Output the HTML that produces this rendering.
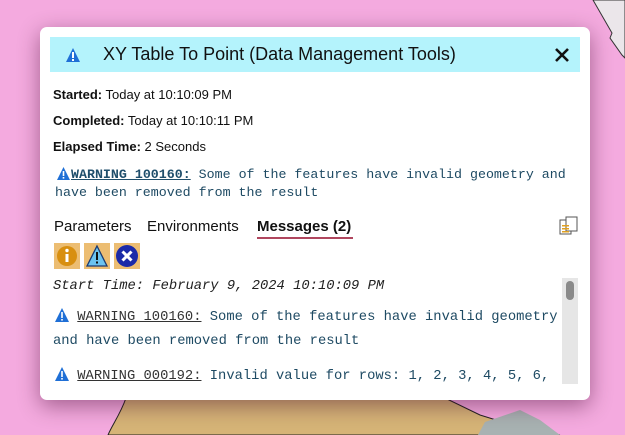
<!DOCTYPE html>
<html><head><meta charset="utf-8"><style>
body{margin:0;width:625px;height:435px;overflow:hidden;background:#f4aadf;position:relative;font-family:"Liberation Sans",sans-serif}
.dlg{position:absolute;left:40px;top:27px;width:550px;height:373px;background:#fff;border-radius:7px;box-shadow:0 6px 22px rgba(60,0,40,.45)}
.hdr{position:absolute;left:10px;top:10px;width:530px;height:35px;background:#b4f3fc}
.abs{position:absolute;white-space:nowrap}
.lbl{font-size:13px;color:#111}
.mono{font-family:"Liberation Mono",monospace;color:#1e4a63}
.tri{display:inline-block;vertical-align:-2px}
.ico{position:absolute;top:216px;width:26px;height:26px;background:#ecbd72}
</style></head><body>
<svg class="abs" style="left:0;top:0" width="625" height="435">
<path d="M126 398 C120 415 112 425 108 435 L560 435 L535 432 L480 415 L445 398 Z" fill="#d6b477" stroke="#222" stroke-width="1"/>
<path d="M485 422 L520 410 L540 420 L560 435 L478 435 Z" fill="#a8b2b2"/>
<path d="M593 0 L612 33 L610 38 L622 55 L625 58 L625 0 Z" fill="#ebe6ea" stroke="#333" stroke-width="1"/>
</svg>
<div class="dlg">
<div class="hdr">
<svg class="abs" style="left:16px;top:11px" width="14" height="14"><path d="M7 0 L14 14 L0 14 Z" fill="#1f6fd6"/><rect x="6" y="4" width="2" height="6" fill="#fff"/><rect x="6" y="11" width="2" height="2" fill="#fff"/></svg>
<div class="abs" style="left:53px;top:7px;font-size:18px;color:#111">XY Table To Point (Data Management Tools)</div>
<svg class="abs" style="left:505px;top:11px" width="14" height="14"><path d="M1 1 L13 13 M13 1 L1 13" stroke="#111" stroke-width="2.6"/></svg>
</div>
<div class="abs lbl" style="left:13px;top:60px"><b>Started:</b> Today at 10:10:09 PM</div>
<div class="abs lbl" style="left:13px;top:86px"><b>Completed:</b> Today at 10:10:11 PM</div>
<div class="abs lbl" style="left:13px;top:112px"><b>Elapsed Time:</b> 2 Seconds</div>
<div class="abs mono" style="left:15px;top:139px;font-size:13.3px;line-height:18px"><svg class="tri" width="16" height="13"><path d="M8.5 0 L15 13 L2 13 Z" fill="#1f6fd6"/><rect x="7.7" y="4" width="1.6" height="5" fill="#fff"/><rect x="7.7" y="10" width="1.6" height="1.6" fill="#fff"/></svg><b style="text-decoration:underline;color:#1f4e6b">WARNING 100160:</b> Some of the features have invalid geometry and<br>have been removed from the result</div>
<div class="abs" style="left:14px;top:191px;font-size:15px;color:#111">Parameters</div>
<div class="abs" style="left:107px;top:191px;font-size:15px;color:#111">Environments</div>
<div class="abs" style="left:217px;top:191px;font-size:15px;color:#111;font-weight:bold">Messages (2)</div>
<div class="abs" style="left:217px;top:210px;width:96px;height:2px;background:#b0465e"></div>
<svg class="abs" style="left:519px;top:189px" width="20" height="20"><rect x="1" y="4" width="11" height="14" fill="#fff" stroke="#555"/><rect x="7" y="1" width="11" height="14" fill="#fff" stroke="#555"/><rect x="3" y="9" width="7" height="1.5" fill="#e0a020"/><rect x="3" y="12" width="7" height="1.5" fill="#e0a020"/><rect x="3" y="15" width="7" height="1.5" fill="#e0a020"/></svg>
<div class="ico" style="left:14px"><svg width="26" height="26"><circle cx="13" cy="13" r="10" fill="#d88f10"/><rect x="11.5" y="11" width="3" height="8" fill="#fff"/><circle cx="13" cy="7.5" r="1.7" fill="#fff"/></svg></div>
<div class="ico" style="left:44px"><svg width="26" height="26"><path d="M13 3 L23 23 L3 23 Z" fill="#6cc3ef" stroke="#1c3a70" stroke-width="1.3"/><rect x="12" y="9" width="2" height="8" fill="#111"/><rect x="12" y="18.5" width="2" height="2" fill="#111"/></svg></div>
<div class="ico" style="left:74px"><svg width="26" height="26"><circle cx="13" cy="13" r="11" fill="#1b2aa8"/><path d="M8.5 8.5 L17.5 17.5 M17.5 8.5 L8.5 17.5" stroke="#fff" stroke-width="3"/></svg></div>
<div class="abs mono" style="left:13px;top:252px;font-size:13.8px;font-style:italic;color:#222">Start Time: February 9, 2024 10:10:09 PM</div>
<div class="abs mono" style="left:15px;top:279px;font-size:13.8px;line-height:24px"><svg class="tri" width="14" height="14"><path d="M7 0 L14 14 L0 14 Z" fill="#1f6fd6"/><rect x="6.2" y="4" width="1.6" height="6" fill="#fff"/><rect x="6.2" y="11" width="1.6" height="1.6" fill="#fff"/></svg> <span style="text-decoration:underline;color:#333">WARNING 100160:</span> Some of the features have invalid geometry</div>
<div class="abs mono" style="left:13px;top:303px;font-size:13.8px;line-height:24px">and have been removed from the result</div>
<div class="abs mono" style="left:15px;top:338px;font-size:13.8px;line-height:24px"><svg class="tri" width="14" height="14"><path d="M7 0 L14 14 L0 14 Z" fill="#1f6fd6"/><rect x="6.2" y="4" width="1.6" height="6" fill="#fff"/><rect x="6.2" y="11" width="1.6" height="1.6" fill="#fff"/></svg> <span style="text-decoration:underline;color:#333">WARNING 000192:</span> Invalid value for rows: 1, 2, 3, 4, 5, 6,</div>
<div class="abs" style="left:522px;top:251px;width:16px;height:106px;background:#e6e6e6"></div>
<div class="abs" style="left:526px;top:254px;width:8px;height:19px;background:#8a8a8a;border-radius:4px"></div>
</div>
</body></html>
